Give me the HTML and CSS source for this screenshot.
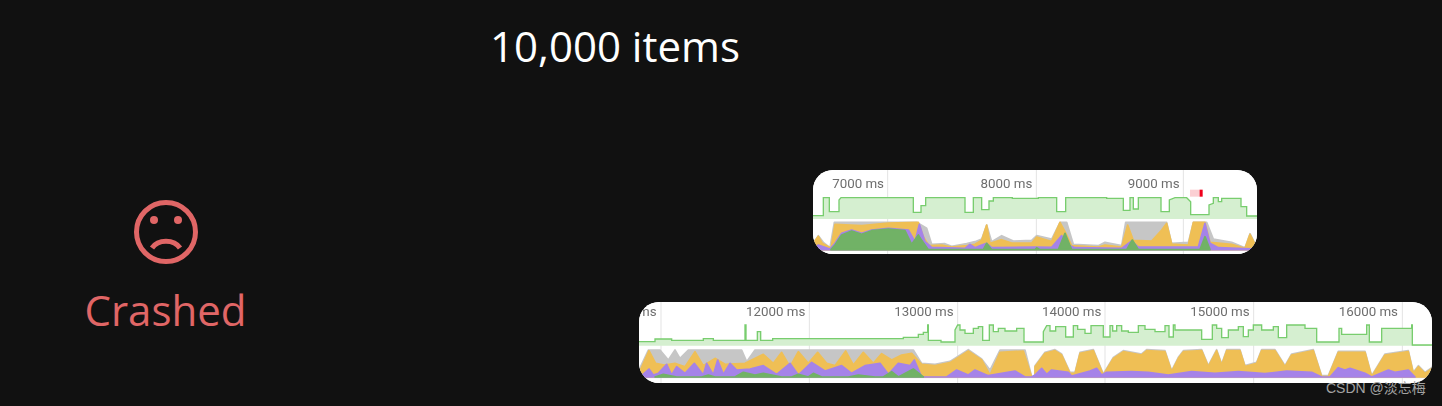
FILE: index.html
```html
<!DOCTYPE html>
<html lang="en">
<head>
<meta charset="utf-8">
<title>10,000 items</title>
<link rel="stylesheet" href="styles.css">
</head>
<body>
<main class="page">
  <h1 class="title">10,000 items</h1>
  <div class="results">
    <section class="crashed">
      <svg class="face" viewBox="0 0 68 68" aria-hidden="true">
        <circle cx="34" cy="34" r="29.5" fill="none" stroke="currentColor" stroke-width="5"/>
        <circle cx="22" cy="22" r="4" fill="currentColor"/>
        <circle cx="46" cy="22" r="4" fill="currentColor"/>
        <path d="M20 50 C26 41 42 41 48 50" fill="none" stroke="currentColor" stroke-width="5"/>
      </svg>
      <p class="crashed-label">Crashed</p>
    </section>
    <section class="charts">
      <div class="chart chart-a">
        <svg class="timeline" viewBox="24 15 1332 252" width="444" height="84">
          <rect x="24" y="15" width="1332" height="252" fill="#fff"/>
          <path class="grid" d="M248 15V267M694 15V267M1135 15V267"/>
          <g class="ticks">
            <text x="237" y="70" text-anchor="end">7000 ms</text>
            <text x="682" y="70" text-anchor="end">8000 ms</text>
            <text x="1124" y="70" text-anchor="end">9000 ms</text>
          </g>
          <rect x="1155" y="74" width="30" height="21" fill="#fbcfd3"/>
          <rect x="1184" y="74" width="9" height="21" fill="#f0001c"/>
          <path class="cpu-fill" d="M24 152H55V98H73V140H102V105L108 98H325V142H348V122H362V98H480V142H505V98H530V134H552V108H565V98H622V100H700V98H755V140H782V98H905V100H955V136H975V98H985V132H1000V98H1068V140H1093V105L1110 98H1145L1157 110V149H1212V120L1225 115V98H1240V110H1250V100H1308V125H1325V153H1356V162H24Z"/>
          <path class="cpu-line" d="M24 152H55V98H73V140H102V105L108 98H325V142H348V122H362V98H480V142H505V98H530V134H552V108H565V98H622V100H700V98H755V140H782V98H905V100H955V136H975V98H985V132H1000V98H1068V140H1093V105L1110 98H1145L1157 110V149H1212V120L1225 115V98H1240V110H1250V100H1308V125H1325V153H1356"/>
          <path class="floor" d="M24 255H1356"/>
          <path class="idle" d="M24 254V238L40 212L55 232L75 248L88 172H335L365 190L380 238L420 236L440 244L485 236L510 230L530 222L545 180L560 230L590 212L625 228L680 226L695 212L740 222L765 172H785L805 238L880 242L900 232L950 242L962 172H1085L1100 235L1150 232L1165 172H1205L1225 222L1280 232L1320 248L1335 206L1356 248V254Z"/>
          <path class="script" d="M24 254V235L40 214L52 235L78 250L90 178L170 182L250 174L340 172L355 215L372 242L410 240L440 246L485 242L510 238L530 226L545 180L555 235L590 224L620 234L680 234L695 216L740 230L765 172L780 200L800 242L880 246L900 240L950 246L968 180L985 226L1040 228L1070 195L1085 175L1100 237L1150 240L1165 172H1200L1215 232L1280 238L1320 250L1335 208L1356 250V254Z"/>
          <path class="render" d="M24 254L40 240L75 252L90 235L110 205L140 195L170 205L200 195L250 190L310 195L330 230L343 178L360 230L380 247L480 250L495 238L510 248L530 240L545 235L560 248L690 246L740 247L770 212L790 240L810 248L950 250L980 228L1000 246L1180 246L1200 175L1215 235L1240 248L1356 252V254Z"/>
          <path class="paint" d="M78 254L90 240L110 210L140 198L170 208L200 197L250 192L300 197L320 238L340 210L350 226L370 254H535L545 235L560 254H690L695 248L705 254H760L780 205L800 254H965L982 225L1000 254H1185L1200 215L1215 254Z"/>
        </svg>
      </div>
      <div class="chart chart-b">
        <svg class="timeline" viewBox="12 21 2379 243" width="793" height="81">
          <rect x="12" y="21" width="2379" height="243" fill="#fff"/>
          <path class="grid" d="M78 21V264M523 21V264M968 21V264M1410 21V264M1856 21V264M2302 21V264"/>
          <g class="ticks">
            <text x="65" y="62" text-anchor="end">ms</text>
            <text x="511" y="62" text-anchor="end">12000 ms</text>
            <text x="956" y="62" text-anchor="end">13000 ms</text>
            <text x="1399" y="62" text-anchor="end">14000 ms</text>
            <text x="1844" y="62" text-anchor="end">15000 ms</text>
            <text x="2289" y="62" text-anchor="end">16000 ms</text>
          </g>
          <path class="cpu-fill" d="M12 140H60V132H110V136H205V131H235V136H330V90H333V136H367V110H377V136H413V131H805V127H850V118H865V112H878V90H880V136H918V141H960V105L968 90H975V105H990V115H1015V100H1030V95H1043V136H1063V90H1075V110H1090V100H1110V108H1145V100H1167V141H1225V110L1235 92H1245V108H1262V95H1292V126H1315V92H1328V103H1350V115H1368V92H1405V126H1425V92H1433V108H1445V92H1460V108H1480V112H1510V92H1530V103H1560V110H1590V92H1602V126H1615V90H1620V105H1700V133H1732V90H1745V100H1760V128H1780V105H1810V95H1825V125H1840V105H1855V90H1880V105H1915V95H1930V128H1955V90H2010V100H2045V141H2112V100H2120V118H2195V90H2203V141H2240V100H2330V90H2332V150H2391V152H12Z"/>
          <path class="cpu-line" d="M12 140H60V132H110V136H205V131H235V136H330V90H333V136H367V110H377V136H413V131H805V127H850V118H865V112H878V90H880V136H918V141H960V105L968 90H975V105H990V115H1015V100H1030V95H1043V136H1063V90H1075V110H1090V100H1110V108H1145V100H1167V141H1225V110L1235 92H1245V108H1262V95H1292V126H1315V92H1328V103H1350V115H1368V92H1405V126H1425V92H1433V108H1445V92H1460V108H1480V112H1510V92H1530V103H1560V110H1590V92H1602V126H1615V90H1620V105H1700V133H1732V90H1745V100H1760V128H1780V105H1810V95H1825V125H1840V105H1855V90H1880V105H1915V95H1930V128H1955V90H2010V100H2045V141H2112V100H2120V118H2195V90H2203V141H2240V100H2330V90H2332V150H2391"/>
          <path class="floor" d="M12 248H2391"/>
          <path class="idle" d="M12 246V225L40 165H75L100 195L120 165L135 190L160 165H320L335 200L360 165H835L860 205L900 208L945 199L1000 164L1040 192L1065 225L1095 165H1170L1190 245H1200V212L1230 172L1260 164L1280 177L1305 232H1320L1335 172L1375 164L1405 237L1435 187L1465 167L1520 177L1535 164L1590 167L1610 227L1630 187L1645 167L1700 164L1720 212L1745 164L1760 207L1775 164H1815L1830 212L1865 202L1880 164H1920L1950 212L1970 177L2035 164L2060 242H2080L2110 169H2190L2210 242L2250 177L2320 167L2335 232L2350 212L2370 232L2391 217V246Z"/>
          <path class="script" d="M12 246V235L42 167L62 205L88 210L120 205L150 215L180 170L205 212L240 190L270 208L330 205L385 178L415 205L440 172L465 215L490 170L520 205L548 172L575 205L600 212L632 168L655 210L685 172L715 205L740 176L770 195L800 180L830 175L860 208L900 212L945 203L1000 168L1040 195L1065 240L1095 172L1165 168L1190 246H1200V215L1230 175L1260 167L1280 180L1305 235H1320L1335 175L1375 167L1405 240L1435 190L1465 170L1520 180L1535 167L1590 170L1610 230L1630 190L1645 170L1700 167L1720 215L1745 167L1760 210L1775 167H1815L1830 215L1865 205L1880 167H1920L1950 215L1970 180L2035 167L2060 245H2080L2110 172H2190L2210 245L2250 180L2320 170L2335 235L2350 215L2370 235L2391 220V246Z"/>
          <path class="render" d="M12 246L22 240L42 222L55 240L70 235L95 208L110 240L125 215L150 235L178 205L205 240L215 205L235 240L248 195L265 238L285 205L305 225L345 222L385 212L425 238L465 205L490 240L530 202L570 228L620 212L650 235L690 212L735 205L760 238L790 205L825 212L838 195L860 246H935L965 225L1000 240L1020 225L1060 242L1100 235L1140 228L1170 246H1190L1200 240L1220 220L1235 238L1250 225L1300 232L1310 243L1365 228L1385 220L1400 240L1415 232L1490 230L1540 232L1600 240L1670 230L1740 235L1810 230L1890 236L1955 228L2030 232L2060 246H2085L2110 218L2130 225L2145 220L2190 235L2210 246L2260 225L2280 232L2320 225L2340 246Z"/>
          <path class="paint" d="M60 246L85 238L125 246H200L220 240L240 246H300L325 232L360 240L385 235L440 246H470L490 238L520 246L535 235L560 246H640L670 240L720 246H745L770 230L790 246L835 222L865 246Z"/>
        </svg>
      </div>
    </section>
  </div>
  <p class="watermark">CSDN @淡忘梅</p>
</main>
</body>
</html>
```
FILE: styles.css
```css
* { box-sizing: border-box; }
html, body { margin: 0; height: 100%; }
body {
  background: #111;
  overflow: hidden;
  font-family: "Open Sans", "Liberation Sans", sans-serif;
}
.page {
  position: relative;
  height: 406px;
  padding-top: 18px;
}
.title {
  margin: 0 0 0 490px;
  color: #fff;
  font-size: 42px;
  font-weight: 400;
  line-height: 56px;
}
.results {
  display: flex;
  margin-top: 96px;
}
.crashed {
  display: flex;
  flex-direction: column;
  align-items: center;
  width: 331px;
  padding-top: 28px;
  color: #e06666;
}
.face {
  display: block;
  width: 68px;
  height: 68px;
}
.crashed-label {
  margin: 16px 0 0;
  font-size: 42px;
  line-height: 56px;
}
.charts {
  display: flex;
  flex-direction: column;
  gap: 48px;
  padding-left: 308px;
}
.chart {
  overflow: hidden;
  background: #fff;
}
.chart-a {
  width: 444px;
  height: 84px;
  margin-left: 174px;
  border-radius: 20px;
}
.chart-b {
  width: 793px;
  height: 81px;
  border-radius: 20px;
}
.timeline {
  display: block;
  filter: blur(0.6px);
}
.grid {
  fill: none;
  stroke: #e3e3e3;
  stroke-width: 3;
}
.ticks text {
  fill: #6e6e6e;
  font-family: Roboto, "Liberation Sans", sans-serif;
  font-size: 40px;
}
.cpu-fill { fill: #d5efd0; }
.cpu-line {
  fill: none;
  stroke: #78cd6e;
  stroke-width: 4;
}
.idle, .script, .render, .paint {
  stroke-width: 5;
  stroke-linejoin: round;
}
.idle { fill: #c6c6c6; stroke: #c6c6c6; }
.script { fill: #efbf55; stroke: #efbf55; }
.render { fill: #a583e8; stroke: #a583e8; }
.paint { fill: #71b266; stroke: #71b266; }
.floor {
  fill: none;
  stroke: #d8d8d8;
  stroke-width: 3;
}
.watermark {
  position: absolute;
  top: 379px;
  left: 1326px;
  margin: 0;
  color: #a3a3a3;
  font-family: "Liberation Sans", "Noto Sans CJK SC", sans-serif;
  font-size: 14px;
  line-height: 18px;
  white-space: nowrap;
}
```
